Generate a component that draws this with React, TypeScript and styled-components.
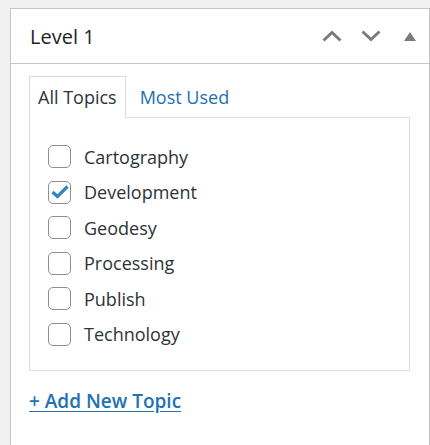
import React from "react";
import styled, { createGlobalStyle } from "styled-components";

const GlobalStyle = createGlobalStyle`
  body {
    margin: 0;
    background: #f0f0f1;
    font-family: "Open Sans", "Noto Sans", sans-serif;
    color: #2c3338;
  }
`;

const Page = styled.div`
  padding: 8px 0 0 10px;
  height: 437px;
  overflow: hidden;
`;

const Postbox = styled.div`
  background: #fff;
  border: 1px solid #c3c4c7;
  min-height: 500px;
`;

const Header = styled.div`
  display: flex;
  align-items: center;
  height: 54px;
  padding: 0 0 0 19px;
  border-bottom: 1px solid #c3c4c7;
`;

const Title = styled.h2`
  flex: 1;
  margin: 0;
  font-size: 20px;
  font-weight: 400;
  color: #1d2327;
`;

const Controls = styled.div`
  display: flex;
  align-items: center;
`;

const IconButton = styled.button`
  display: flex;
  align-items: center;
  justify-content: center;
  width: 39px;
  height: 36px;
  padding: 0;
  border: 0;
  background: transparent;
  color: #787c82;
`;

const Inside = styled.div`
  padding: 12px 19px 0 18px;
`;

const Tabs = styled.ul`
  display: flex;
  gap: 5px;
  margin: 0;
  padding: 0;
  list-style: none;
  position: relative;
  z-index: 1;
`;

const Tab = styled.li<{ $active?: boolean }>`
  height: 40px;
  padding: 0 8px 1px;
  display: flex;
  align-items: center;
  font-size: 18px;
  border: 1px solid ${(p) => (p.$active ? "#dcdcde" : "transparent")};
  border-bottom: 0;
  background: ${(p) => (p.$active ? "#fff" : "transparent")};
  color: ${(p) => (p.$active ? "#2c3338" : "#2271b1")};
  margin-bottom: -1px;
`;

const Panel = styled.div`
  border: 1px solid #dcdcde;
  padding: 27px 18px 24px;
  display: flex;
  flex-direction: column;
  gap: 12.5px;
`;

const Item = styled.label`
  display: flex;
  align-items: center;
  gap: 13px;
  height: 23px;
  font-size: 18px;
  color: #2c3338;
`;

const Box = styled.span`
  box-sizing: border-box;
  width: 23px;
  height: 23px;
  border: 1px solid #8c8f94;
  border-radius: 5px;
  background: #fff;
  display: flex;
  align-items: center;
  justify-content: center;
`;

const AddLink = styled.a`
  display: inline-block;
  margin-top: 17px;
  font-size: 19px;
  font-weight: 600;
  color: #2271b1;
  text-decoration: underline;
  text-underline-offset: 3px;
`;

const topics = [
  { name: "Cartography", checked: false },
  { name: "Development", checked: true },
  { name: "Geodesy", checked: false },
  { name: "Processing", checked: false },
  { name: "Publish", checked: false },
  { name: "Technology", checked: false },
];

const Check = () => (
  <svg width="18" height="14" viewBox="0 0 18 14">
    <path d="M1.5 7 L6.5 11.5 L16.5 1.5" fill="none" stroke="#3582c4" strokeWidth="3.2" />
  </svg>
);

export default function App() {
  return (
    <>
      <GlobalStyle />
      <Page>
        <Postbox>
          <Header>
            <Title>Level 1</Title>
            <Controls>
              <IconButton>
                <svg width="20" height="12" viewBox="0 0 20 12">
                  <path d="M1.5 10.5 L10 2.5 L18.5 10.5" fill="none" stroke="currentColor" strokeWidth="3" />
                </svg>
              </IconButton>
              <IconButton>
                <svg width="20" height="12" viewBox="0 0 20 12">
                  <path d="M1.5 1.5 L10 9.5 L18.5 1.5" fill="none" stroke="currentColor" strokeWidth="3" />
                </svg>
              </IconButton>
              <IconButton>
                <svg width="12" height="9" viewBox="0 0 12 9">
                  <path d="M0 9 L6 0 L12 9 Z" fill="currentColor" />
                </svg>
              </IconButton>
            </Controls>
          </Header>
          <Inside>
            <Tabs>
              <Tab $active>All Topics</Tab>
              <Tab>Most Used</Tab>
            </Tabs>
            <Panel>
              {topics.map((t) => (
                <Item key={t.name}>
                  <Box>{t.checked && <Check />}</Box>
                  {t.name}
                </Item>
              ))}
            </Panel>
            <AddLink href="#">+ Add New Topic</AddLink>
          </Inside>
        </Postbox>
      </Page>
    </>
  );
}
